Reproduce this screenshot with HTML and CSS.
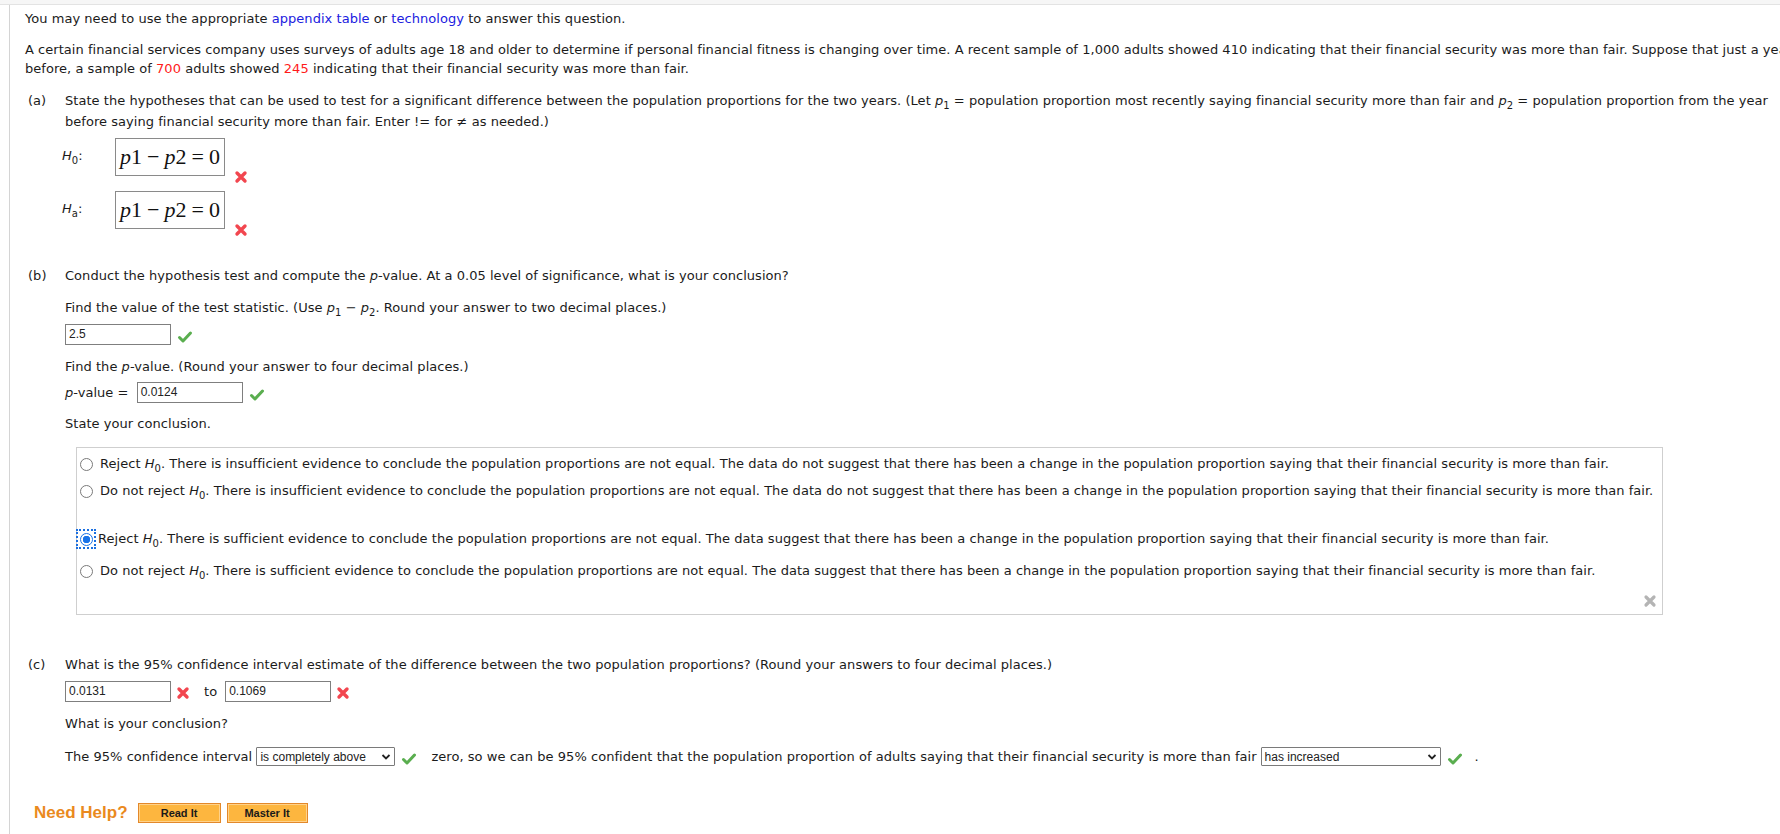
FILE: index.html
```html
<!DOCTYPE html>
<html>
<head>
<meta charset="utf-8">
<link rel="stylesheet" href="styles.css">
</head>
<body>
<div class="topbar"></div>
<div class="page">
  <div class="intro">You may need to use the appropriate <span class="link">appendix table</span> or <span class="link">technology</span> to answer this question.</div>
  <div class="para"><span>A certain financial services company uses surveys of adults age 18 and older to determine if personal financial fitness is changing over time. A recent sample of 1,000 adults showed 410 indicating that their financial security was more than fair. Suppose that just a year</span> <span>before, a sample of </span><span class="red">700</span><span> adults showed </span><span class="red">245</span><span> indicating that their financial security was more than fair.</span></div>

  <div class="part part-a">
    <div class="plabel">(a)</div>
    <div class="pbody">
      <div class="ptext-a"><span>State the hypotheses that can be used to test for a significant difference between the population proportions for the two years. (Let </span><i class="v">p</i><sub>1</sub><span> = population proportion most recently saying financial security more than fair and </span><i class="v">p</i><sub>2</sub><span> = population proportion from the year</span> <span>before saying financial security more than fair. Enter != for ≠ as needed.)</span></div>
      <div class="hyp hyp0">
        <div class="hlabel"><i class="v">H</i><sub>0</sub>:</div>
        <div class="mbox"><i>p</i>1<span class="op">−</span><i>p</i>2<span class="op">=</span>0</div>
        <svg class="xmark hx" width="14" height="14" viewBox="0 0 14 14"><path d="M3 3 L11 11 M11 3 L3 11" stroke="#f2464f" stroke-width="3.4" stroke-linecap="round"/></svg>
      </div>
      <div class="hyp hypa">
        <div class="hlabel"><i class="v">H</i><sub>a</sub>:</div>
        <div class="mbox"><i>p</i>1<span class="op">−</span><i>p</i>2<span class="op">=</span>0</div>
        <svg class="xmark hx" width="14" height="14" viewBox="0 0 14 14"><path d="M3 3 L11 11 M11 3 L3 11" stroke="#f2464f" stroke-width="3.4" stroke-linecap="round"/></svg>
      </div>
    </div>
  </div>

  <div class="part part-b">
    <div class="plabel">(b)</div>
    <div class="pbody">
      <div class="line">Conduct the hypothesis test and compute the <i class="v">p</i>-value. At a 0.05 level of significance, what is your conclusion?</div>
      <div class="line m12">Find the value of the test statistic. (Use <i class="v">p</i><sub>1</sub> − <i class="v">p</i><sub>2</sub>. Round your answer to two decimal places.)</div>
      <div class="ans m6">
        <span class="inp">2.5</span>
        <svg class="check" width="16" height="14" viewBox="0 0 16 14"><path d="M2.5 7.5 L6 11 L13.5 3" fill="none" stroke="#5aae4f" stroke-width="3" stroke-linecap="round" stroke-linejoin="round"/></svg>
      </div>
      <div class="line m12">Find the <i class="v">p</i>-value. (Round your answer to four decimal places.)</div>
      <div class="ans m5">
        <span class="pv"><i class="v">p</i>-value = </span><span class="inp">0.0124</span>
        <svg class="check" width="16" height="14" viewBox="0 0 16 14"><path d="M2.5 7.5 L6 11 L13.5 3" fill="none" stroke="#5aae4f" stroke-width="3" stroke-linecap="round" stroke-linejoin="round"/></svg>
      </div>
      <div class="line m11">State your conclusion.</div>
      <div class="choices">
        <div class="choice c1"><span class="radio"></span><span class="ctext">Reject <i class="v">H</i><sub>0</sub>. There is insufficient evidence to conclude the population proportions are not equal. The data do not suggest that there has been a change in the population proportion saying that their financial security is more than fair.</span></div>
        <div class="choice c2"><span class="radio"></span><span class="ctext">Do not reject <i class="v">H</i><sub>0</sub>. There is insufficient evidence to conclude the population proportions are not equal. The data do not suggest that there has been a change in the population proportion saying that their financial security is more than fair.</span></div>
        <div class="choice c3"><span class="focus"><span class="radio on"></span></span><span class="ctext">Reject <i class="v">H</i><sub>0</sub>. There is sufficient evidence to conclude the population proportions are not equal. The data suggest that there has been a change in the population proportion saying that their financial security is more than fair.</span></div>
        <div class="choice c4"><span class="radio"></span><span class="ctext">Do not reject <i class="v">H</i><sub>0</sub>. There is sufficient evidence to conclude the population proportions are not equal. The data suggest that there has been a change in the population proportion saying that their financial security is more than fair.</span></div>
        <div class="clear-row">
          <svg width="14" height="14" viewBox="0 0 14 14"><path d="M3 3 L11 11 M11 3 L3 11" stroke="#b4b4b4" stroke-width="3.2" stroke-linecap="round"/></svg>
        </div>
      </div>
    </div>
  </div>

  <div class="part part-c">
    <div class="plabel">(c)</div>
    <div class="pbody">
      <div class="line">What is the 95% confidence interval estimate of the difference between the two population proportions? (Round your answers to four decimal places.)</div>
      <div class="ans m6">
        <span class="inp">0.0131</span>
        <svg class="xmark ax" width="14" height="14" viewBox="0 0 14 14"><path d="M3 3 L11 11 M11 3 L3 11" stroke="#f2464f" stroke-width="3.4" stroke-linecap="round"/></svg>
        <span class="to">to</span>
        <span class="inp">0.1069</span>
        <svg class="xmark ax" width="14" height="14" viewBox="0 0 14 14"><path d="M3 3 L11 11 M11 3 L3 11" stroke="#f2464f" stroke-width="3.4" stroke-linecap="round"/></svg>
      </div>
      <div class="line m12">What is your conclusion?</div>
      <div class="ans concl m12">
        <span class="pre">The 95% confidence interval </span>
        <span class="select s1">is completely above<svg class="chev" width="10" height="8" viewBox="0 0 10 8"><path d="M1.5 2 L5 5.5 L8.5 2" fill="none" stroke="#222" stroke-width="1.8"/></svg></span>
        <svg class="check" width="16" height="14" viewBox="0 0 16 14"><path d="M2.5 7.5 L6 11 L13.5 3" fill="none" stroke="#5aae4f" stroke-width="3" stroke-linecap="round" stroke-linejoin="round"/></svg>
        <span class="zero">zero, so we can be 95% confident that the population proportion of adults saying that their financial security is more than fair</span>
        <span class="select s2">has increased<svg class="chev" width="10" height="8" viewBox="0 0 10 8"><path d="M1.5 2 L5 5.5 L8.5 2" fill="none" stroke="#222" stroke-width="1.8"/></svg></span>
        <svg class="check" width="16" height="14" viewBox="0 0 16 14"><path d="M2.5 7.5 L6 11 L13.5 3" fill="none" stroke="#5aae4f" stroke-width="3" stroke-linecap="round" stroke-linejoin="round"/></svg>
        <span class="dot">.</span>
      </div>
    </div>
  </div>

  <div class="help">
    <span class="need">Need Help?</span>
    <span class="btn b1">Read It</span>
    <span class="btn b2">Master It</span>
  </div>
</div>
</body>
</html>
```

FILE: styles.css
```css
html, body {
  margin: 0;
  padding: 0;
  overflow: hidden;
  background: #fff;
}
body {
  font-family: "DejaVu Sans", Verdana, sans-serif;
  font-size: 13px;
  letter-spacing: 0.04px;
  color: #1b1b1b;
  width: 1780px;
  height: 834px;
}
.topbar {
  height: 4px;
  background: #f6f6f6;
  border-bottom: 1px solid #e3e3e3;
}
.page {
  margin-left: 9px;
  border-left: 1px solid #d4d4d4;
  padding: 4px 0 0 15px;
  width: 1770px;
  height: 840px;
}
.intro {
  line-height: 20px;
}
.link {
  color: #2020e0;
}
.red {
  color: #ff1a1a;
}
.para {
  margin-top: 11px;
  line-height: 19px;
}
.v {
  font-style: italic;
}
sub {
  font-size: 10px;
  line-height: 0;
  vertical-align: -4px;
}
.part {
  display: flex;
  padding-left: 3px;
}
.plabel {
  width: 37px;
  flex: none;
  line-height: 20px;
}
.pbody {
  flex: 1;
  min-width: 0;
}
.part-a {
  margin-top: 12px;
}
.part-a .plabel {
  line-height: 21px;
}
.ptext-a {
  line-height: 21px;
}
.hyp {
  display: flex;
  align-items: flex-start;
  margin-left: -3px;
}
.hyp0 {
  margin-top: 6px;
}
.hypa {
  margin-top: 15px;
}
.hlabel {
  width: 53px;
  flex: none;
  line-height: 36px;
}
.mbox {
  box-sizing: border-box;
  width: 110px;
  height: 38px;
  border: 1px solid #8a8a8a;
  font-family: "Liberation Serif", "Times New Roman", serif;
  font-size: 22px;
  letter-spacing: 0;
  display: flex;
  align-items: center;
  justify-content: center;
  color: #111;
}
.op {
  margin: 0 5px;
}
.hx {
  margin-left: 9px;
  margin-top: 32px;
  margin-bottom: -8px;
}
.part-b {
  margin-top: 37px;
}
.part-c {
  margin-top: 40px;
}
.line {
  line-height: 20px;
}
.m5 { margin-top: 5px; }
.m6 { margin-top: 6px; }
.m11 { margin-top: 11px; }
.m12 { margin-top: 12px; }
.ans {
  display: flex;
  align-items: center;
  height: 21px;
}
.inp {
  box-sizing: border-box;
  display: inline-block;
  width: 106px;
  height: 21px;
  border: 1px solid #7f7f7f;
  font-family: "Liberation Sans", Arial, sans-serif;
  font-size: 12px;
  letter-spacing: 0;
  line-height: 19px;
  padding-left: 3px;
  color: #222;
}
.check {
  margin-left: 6px;
  margin-top: 4px;
}
.pv {
  margin-right: 4px;
  white-space: pre;
}
.ax {
  margin-left: 5px;
  margin-top: 3px;
}
.to {
  margin: 0 8px 0 14px;
}
.choices {
  box-sizing: border-box;
  margin-top: 13px;
  margin-left: 11px;
  width: 1587px;
  height: 168px;
  border: 1px solid #cfcfcf;
  padding-top: 6px;
}
.choice {
  display: flex;
  align-items: center;
  line-height: 20px;
  white-space: nowrap;
}
.c2 { margin-top: 7px; }
.c3 { margin-top: 28px; }
.c4 { margin-top: 12px; }
.radio {
  box-sizing: border-box;
  display: inline-block;
  width: 13px;
  height: 13px;
  border-radius: 50%;
  border: 1px solid #7a7a7a;
  background: #fff;
  margin: 0 7px 0 3px;
  flex: none;
}
.radio.on {
  border-color: #1a73e8;
  background: radial-gradient(circle, #1a73e8 0 3.5px, #fff 4px);
  margin: 0;
}
.focus {
  display: inline-flex;
  align-items: center;
  justify-content: center;
  width: 20px;
  height: 20px;
  box-sizing: border-box;
  border: 2px dotted #1a6fe0;
  margin: 0 2px 0 -1px;
  flex: none;
}
.clear-row {
  display: flex;
  justify-content: flex-end;
  padding-right: 5px;
  margin-top: 13px;
}
.concl {
  white-space: nowrap;
}
.pre {
  white-space: pre;
}
.select {
  box-sizing: border-box;
  display: inline-flex;
  align-items: center;
  justify-content: space-between;
  height: 19px;
  border: 1px solid #7a7a7a;
  font-family: "Liberation Sans", Arial, sans-serif;
  font-size: 12px;
  letter-spacing: 0;
  color: #222;
  padding: 0 3px 0 3px;
  border-radius: 1px;
}
.s1 {
  width: 139px;
  margin-left: 0;
}
.s2 {
  width: 180px;
  margin-left: 4px;
}
.chev {
  margin-left: 4px;
}
.zero {
  margin-left: 14px;
}
.dot {
  margin-left: 12px;
}
.help {
  display: flex;
  align-items: center;
  margin-top: 35px;
  margin-left: 9px;
  height: 21px;
}
.need {
  font-family: "Liberation Sans", Arial, sans-serif;
  font-weight: bold;
  font-size: 17px;
  letter-spacing: 0;
  color: #ea8a1e;
  margin-right: 10px;
}
.btn {
  box-sizing: border-box;
  display: inline-flex;
  align-items: center;
  justify-content: center;
  height: 20px;
  background: #fdb63f;
  border: 1px solid #e3882a;
  box-shadow: inset 0 0 0 1px #ffd28a;
  font-family: "Liberation Sans", Arial, sans-serif;
  font-weight: bold;
  font-size: 11px;
  letter-spacing: 0;
  color: #1a1a1a;
  margin-right: 6px;
}
.b1 { width: 83px; }
.b2 { width: 81px; }
```
